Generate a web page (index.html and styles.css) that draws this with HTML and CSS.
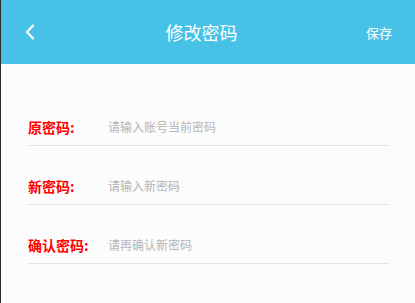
FILE: index.html
```html
<!DOCTYPE html>
<html lang="zh-CN">
<head>
  <meta charset="UTF-8">
  <meta name="viewport" content="width=device-width, initial-scale=1.0">
  <title>修改密码</title>
  <link rel="stylesheet" href="styles.css">
</head>
<body>
  <div class="page">
    <div class="header">
      <a class="back" href="#">
        <svg width="10" height="16" viewBox="0 0 10 16"><path d="M8 1.5 L2 8 L8 14.5" fill="none" stroke="#fff" stroke-width="2.2" stroke-linecap="round" stroke-linejoin="round"/></svg>
      </a>
      <h1 class="title">修改密码</h1>
      <a class="save" href="#">保存</a>
    </div>
    <form class="form">
      <div class="row">
        <label>原密码:</label>
        <input type="password" placeholder="请输入账号当前密码">
      </div>
      <div class="row">
        <label>新密码:</label>
        <input type="password" placeholder="请输入新密码">
      </div>
      <div class="row">
        <label>确认密码:</label>
        <input type="password" placeholder="请再确认新密码">
      </div>
    </form>
  </div>
</body>
</html>
```

FILE: styles.css
```css
html, body{
  margin: 0;
  padding: 0;
  height: 100%;
}
body{
  background-color: #fcfcfc;
  font-family: "Noto Sans CJK SC", "Liberation Sans", sans-serif;
  border-left: 1px solid #2b2b2b;
}
.page{
  min-height: 100%;
}
.header{
  height: 64px;
  background-color: #47c2e6;
  display: flex;
  align-items: center;
  padding: 0 23px 0 24px;
}
.header .back{
  display: flex;
  align-items: center;
  width: 60px;
  height: 20px;
  margin-top: -1px;
}
.header .title{
  flex: 1;
  margin: 0;
  text-align: center;
  font-size: 18px;
  font-weight: normal;
  color: #fff;
  padding-right: 14px;
}
.header .save{
  width: 60px;
  text-align: right;
  font-size: 13px;
  color: #fff;
  text-decoration: none;
}
.form{
  margin: 23px 26px 0 27px;
}
.row{
  display: flex;
  align-items: center;
  padding: 29px 0 7px;
  border-bottom: 1px solid #e3e3e3;
}
.row label{
  width: 80px;
  font-size: 14px;
  font-weight: bold;
  color: #ff0000;
  line-height: 22px;
}
.row input{
  flex: 1;
  border: 0;
  outline: none;
  background: transparent;
  font-family: inherit;
  font-size: 12px;
  line-height: 22px;
  padding: 0;
  color: #333;
}
.row input::placeholder{
  color: #b4b4b4;
}
```
